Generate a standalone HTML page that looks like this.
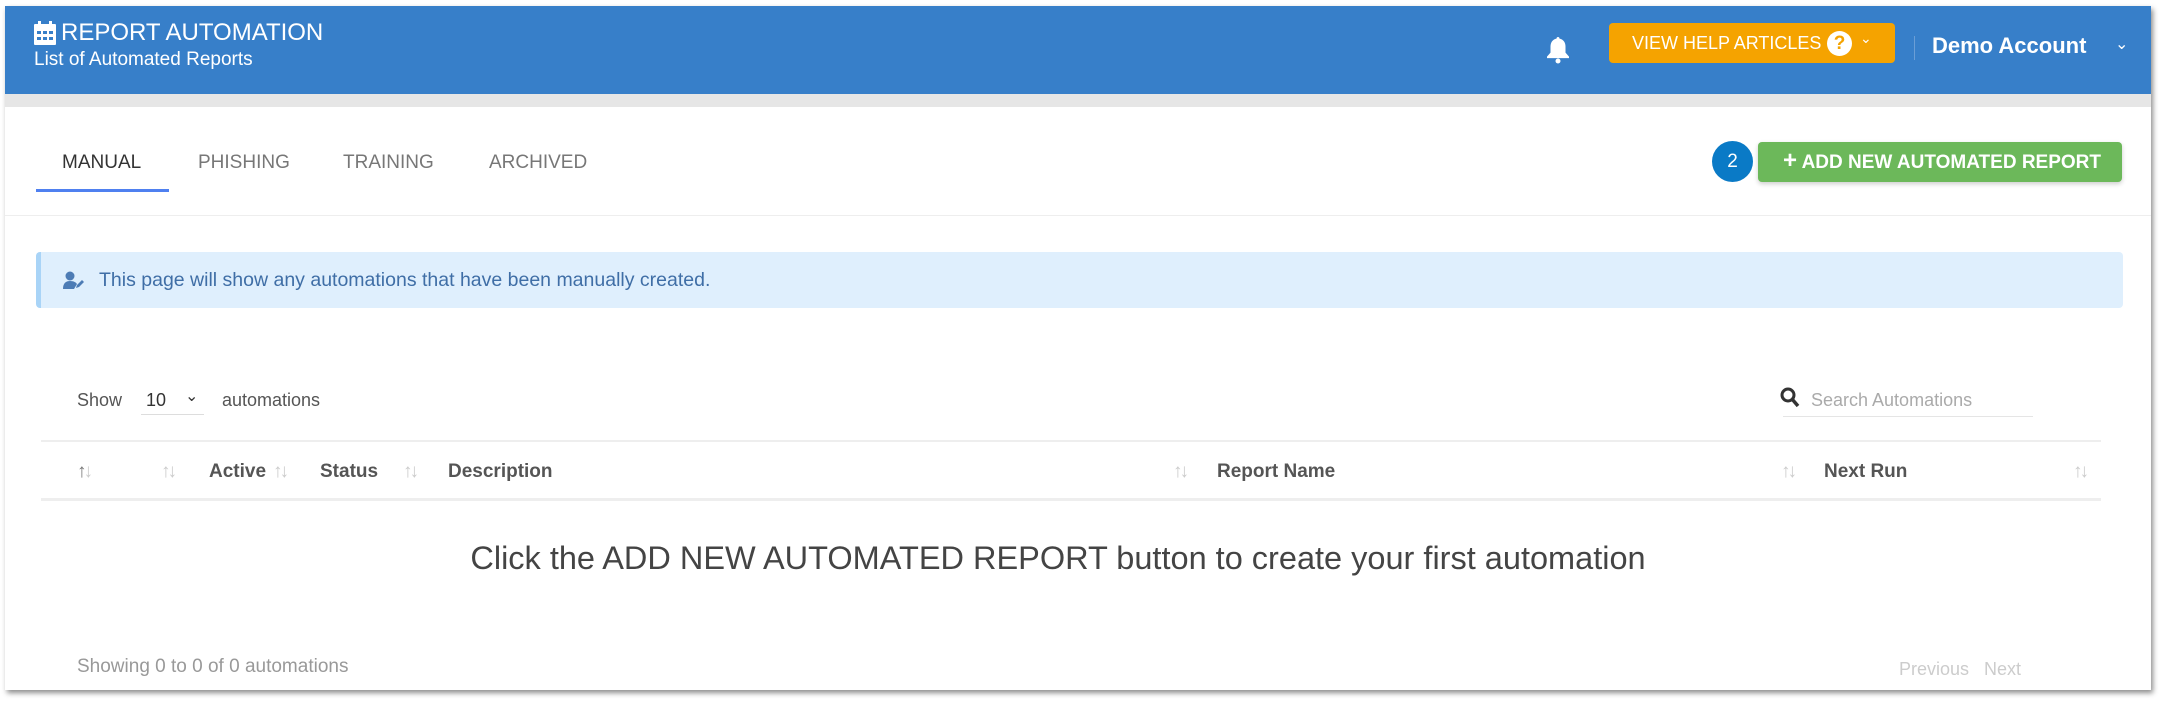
<!DOCTYPE html>
<html><head><meta charset="utf-8"><style>
*{box-sizing:border-box;margin:0;padding:0}
body{width:2160px;height:701px;background:#fff;font-family:"Liberation Sans",sans-serif;position:relative;overflow:hidden}
.frame{position:absolute;left:5px;top:6px;width:2146px;height:684px;background:#fff;box-shadow:2px 3px 5px rgba(0,0,0,.45)}
.abs{position:absolute;white-space:nowrap}
.hdr{position:absolute;left:0;top:0;width:2146px;height:88px;background:#377fc9}
.band{position:absolute;left:0;top:88px;width:2146px;height:13px;background:#e6e6e6}
.tab{font-size:19px;color:#777;top:146px}
.th{font-size:19px;font-weight:bold;color:#555;top:455px}
.ar{font-size:19px;color:#ccc;top:455px;letter-spacing:-3px}
</style></head><body>
<div class="frame">
<div class="hdr">
 <svg class="abs" style="left:29px;top:15px" width="22" height="24" viewBox="0 0 22 24"><rect x="4" y="0" width="3" height="5" fill="#fff"/><rect x="15" y="0" width="3" height="5" fill="#fff"/><rect x="0" y="3" width="22" height="21" rx="1" fill="#fff"/><g fill="#377fc9"><rect x="3" y="10" width="4" height="3"/><rect x="9" y="10" width="4" height="3"/><rect x="15" y="10" width="4" height="3"/><rect x="3" y="16" width="4" height="3"/><rect x="9" y="16" width="4" height="3"/><rect x="15" y="16" width="4" height="3"/></g></svg>
 <div class="abs" style="left:56px;top:13px;font-size:24px;color:#fff">REPORT AUTOMATION</div>
 <div class="abs" style="left:29px;top:43px;font-size:19px;color:#fff">List of Automated Reports</div>
 <svg class="abs" style="left:1541px;top:30px" width="24" height="28" viewBox="0 0 24 28"><path d="M12 1c1 0 1.5.7 1.5 1.6 4 .8 6 4 6 8v6l3.5 4v1.5H1V20.6l3.5-4v-6c0-4 2-7.2 6-8C10.5 1.7 11 1 12 1z" fill="#fff"/><circle cx="12" cy="25" r="2.5" fill="#fff"/></svg>
 <div class="abs" style="left:1604px;top:17px;width:286px;height:40px;background:#f5a300;border-radius:4px"></div>
 <div class="abs" style="left:1627px;top:27px;font-size:18px;color:#fff">VIEW HELP ARTICLES</div>
 <div class="abs" style="left:1822px;top:25px;width:25px;height:25px;border-radius:50%;background:#fff;color:#f5a300;font-weight:bold;font-size:19px;text-align:center;line-height:25px">?</div>
 <div class="abs" style="left:1855px;top:24px;font-size:14px;color:#fff">&#8964;</div>
 <div class="abs" style="left:1909px;top:30px;width:1px;height:24px;background:#6a9ed6"></div>
 <div class="abs" style="left:1927px;top:27px;font-size:22px;font-weight:bold;color:#fff">Demo Account</div>
 <div class="abs" style="left:2110px;top:28px;font-size:16px;color:#fff">&#8964;</div>
</div>
<div class="band"></div>
<div class="abs tab" style="left:57px;color:#333">MANUAL</div>
<div class="abs tab" style="left:193px">PHISHING</div>
<div class="abs tab" style="left:338px">TRAINING</div>
<div class="abs tab" style="left:484px">ARCHIVED</div>
<div class="abs" style="left:31px;top:183px;width:133px;height:3px;background:#4f80f0"></div>
<div class="abs" style="left:0;top:209px;width:2146px;height:1px;background:#eee"></div>
<div class="abs" style="left:1707px;top:135px;width:41px;height:41px;border-radius:50%;background:#0a7ac6;color:#fff;font-size:19px;text-align:center;line-height:41px">2</div>
<div class="abs" style="left:1753px;top:136px;width:364px;height:40px;background:#6cb85a;border-radius:4px;box-shadow:0 2px 5px rgba(0,0,0,.2)"></div>
<div class="abs" style="left:1778px;top:145px;font-size:19px;color:#fff;font-weight:bold"><span style="font-size:24px;line-height:19px">+</span> ADD NEW AUTOMATED REPORT</div>
<div class="abs" style="left:31px;top:246px;width:2087px;height:56px;background:#dfeffd;border-left:5px solid #a9d4f7;border-radius:4px"></div>
<svg class="abs" style="left:58px;top:265px" width="22" height="18" viewBox="0 0 22 18"><circle cx="7" cy="5" r="4.5" fill="#4d7cb5"/><path d="M0 18c0-6 3-8 7-8s6 1.5 7 3l-3 5z" fill="#4d7cb5"/><path d="M13 17l1-3 5-5 2 2-5 5z" fill="#4d7cb5"/></svg>
<div class="abs" style="left:94px;top:263px;font-size:19.5px;color:#3f6ea6">This page will show any automations that have been manually created.</div>
<div class="abs" style="left:72px;top:384px;font-size:18px;color:#555">Show</div>
<div class="abs" style="left:141px;top:384px;font-size:18px;color:#333">10</div>
<div class="abs" style="left:180px;top:380px;font-size:16px;color:#333">&#8964;</div>
<div class="abs" style="left:136px;top:408px;width:63px;height:1px;background:#ddd"></div>
<div class="abs" style="left:217px;top:384px;font-size:18px;color:#555">automations</div>
<svg class="abs" style="left:1775px;top:381px" width="20" height="22" viewBox="0 0 20 22"><circle cx="8" cy="8" r="6" fill="none" stroke="#333" stroke-width="3"/><path d="M12 12l6 7" stroke="#333" stroke-width="3.5"/></svg>
<div class="abs" style="left:1806px;top:384px;font-size:18px;color:#aaa">Search Automations</div>
<div class="abs" style="left:1778px;top:410px;width:250px;height:1px;background:#e5e5e5"></div>
<div class="abs" style="left:36px;top:434px;width:2060px;height:2px;background:#eee"></div>
<div class="abs" style="left:36px;top:492px;width:2060px;height:3px;background:#eee"></div>
<div class="abs ar" style="left:72px;color:#777">↑<span style="color:#ccc">↓</span></div>
<div class="abs ar" style="left:156px">↑↓</div>
<div class="abs th" style="left:204px">Active</div>
<div class="abs ar" style="left:268px">↑↓</div>
<div class="abs th" style="left:315px">Status</div>
<div class="abs ar" style="left:398px">↑↓</div>
<div class="abs th" style="left:443px">Description</div>
<div class="abs ar" style="left:1168px">↑↓</div>
<div class="abs th" style="left:1212px">Report Name</div>
<div class="abs ar" style="left:1776px">↑↓</div>
<div class="abs th" style="left:1819px">Next Run</div>
<div class="abs ar" style="left:2068px">↑↓</div>
<div class="abs" style="left:0;width:2106px;top:534px;font-size:32.5px;color:#444;text-align:center">Click the ADD NEW AUTOMATED REPORT button to create your first automation</div>
<div class="abs" style="left:72px;top:650px;font-size:19px;color:#999">Showing 0 to 0 of 0 automations</div>
<div class="abs" style="left:1894px;top:653px;font-size:18px;color:#ccc">Previous&nbsp;&nbsp;&nbsp;Next</div>
</div>
</body></html>
